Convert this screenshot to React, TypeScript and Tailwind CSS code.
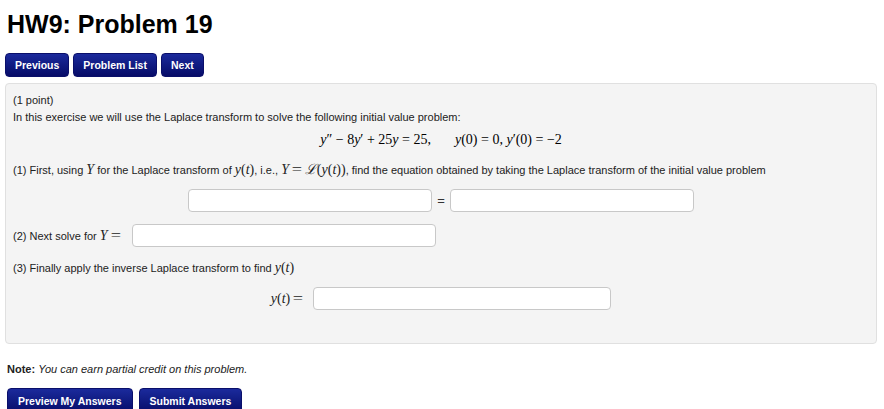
export default function App() {
  const btn =
    "rounded-[4px] border border-[#0a0f6a] bg-gradient-to-b from-[#1b2a9c] to-[#070b68] text-[10.5px] font-bold text-white";
  const field = "h-[23px] rounded-[4px] border border-[#c8c8c8] bg-white";
  const m = "font-['Liberation_Serif',serif] italic";
  const r = "font-['Liberation_Serif',serif] not-italic";
  const eq = "mx-[4px] inline-block scale-x-[1.3]";

  return (
    <div className="min-h-[409px] bg-white font-['Liberation_Sans',Arial,sans-serif] text-[#222] overflow-hidden">
      <div className="pl-[5px] pr-[7px] pt-[10px]">
        <h1 className="text-[25px] font-bold leading-[28px] text-black pl-[2px]">HW9: Problem 19</h1>

        <div className="mt-[15px] flex gap-[4px]">
          <button className={`${btn} px-[9px] leading-[22px]`}>Previous</button>
          <button className={`${btn} px-[9px] leading-[22px]`}>Problem List</button>
          <button className={`${btn} px-[9px] leading-[22px]`}>Next</button>
        </div>

        <div className="mt-[6px] h-[261px] rounded-[4px] border border-[#e0e0e0] bg-[#f4f4f4] px-[7px] pt-[8px] text-[11px] leading-[17px]">
          <p>(1 point)</p>
          <p>In this exercise we will use the Laplace transform to solve the following initial value problem:</p>

          <div className={`${r} mt-[5px] text-center text-[14px] leading-[18px] text-black`}>
            <span className={m}>y</span>″ − 8<span className={m}>y</span>′ + 25<span className={m}>y</span> = 25,
            <span className="inline-block w-[24px]" />
            <span className={m}>y</span>(0) = 0, <span className={m}>y</span>′(0) = −2
          </div>

          <p className="mt-[12px]">
            (1) First, using <span className={`${m} text-[14px]`}>Y</span> for the Laplace transform of{" "}
            <span className={`${r} text-[14px]`}><span className={m}>y</span>(<span className={m}>t</span>)</span>, i.e.,{" "}
            <span className={`${r} text-[14px]`}>
              <span className={m}>Y</span>
              <span className={eq}>=</span>
              <span className={m}>ℒ</span>(<span className={m}>y</span>(<span className={m}>t</span>))
            </span>
            , find the equation obtained by taking the Laplace transform of the initial value problem
          </p>

          <div className="mt-[10px] flex items-center justify-center gap-[5px]">
            <div className={`${field} w-[244px]`} />
            <span className="text-[13px] text-[#333]">=</span>
            <div className={`${field} w-[244px]`} />
          </div>

          <div className="mt-[12px] flex items-center gap-[8px]">
            <span>
              (2) Next solve for <span className={`${m} text-[14px]`}>Y</span>
              <span className={`${r} ${eq} text-[14px]`}>=</span>
            </span>
            <div className={`${field} w-[304px]`} />
          </div>

          <p className="mt-[12px]">
            (3) Finally apply the inverse Laplace transform to find{" "}
            <span className={`${r} text-[14px]`}><span className={m}>y</span>(<span className={m}>t</span>)</span>
          </p>

          <div className="mt-[10px] flex items-center justify-center gap-[7px]">
            <span className={`${r} text-[14px]`}>
              <span className={m}>y</span>(<span className={m}>t</span>)
              <span className={eq}>=</span>
            </span>
            <div className={`${field} w-[298px]`} />
          </div>
        </div>

        <p className="mt-[17px] pl-[2px] text-[11px] leading-[17px]">
          <b>Note:</b> <i>You can earn partial credit on this problem.</i>
        </p>

        <div className="mt-[10px] flex gap-[6px] pl-[2px]">
          <button className={`${btn} px-[10px] leading-[24px]`}>Preview My Answers</button>
          <button className={`${btn} px-[10px] leading-[24px]`}>Submit Answers</button>
        </div>
      </div>
    </div>
  );
}
